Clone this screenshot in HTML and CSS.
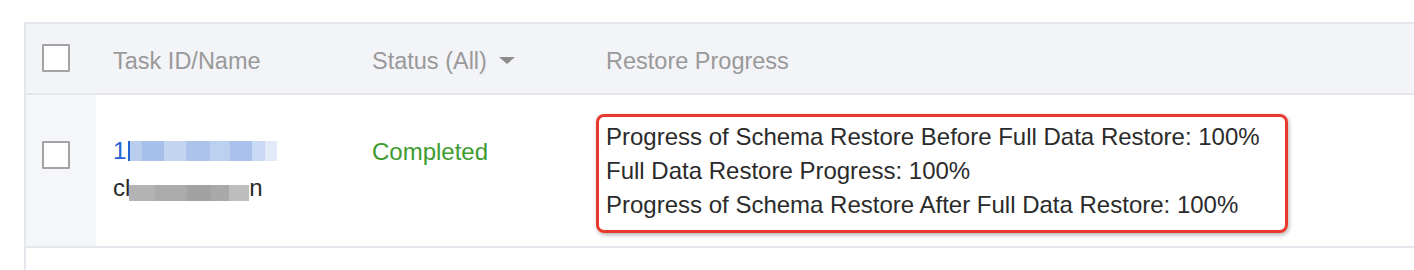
FILE: index.html
```html
<!DOCTYPE html>
<html lang="en">
<head>
    <meta charset="UTF-8">
    <meta name="viewport" content="width=device-width, initial-scale=1.0">
    <title>Restore Tasks</title>
    <link rel="stylesheet" href="styles.css">
</head>
<body>
    <!-- Task table -->
    <div class="task-table">
        <div class="table-head">
            <div class="cell check-cell"><span class="checkbox"></span></div>
            <div class="cell">Task ID/Name</div>
            <div class="cell">Status (All) <span class="caret"></span></div>
            <div class="cell">Restore Progress</div>
        </div>
        <div class="table-row">
            <div class="cell check-cell"><span class="checkbox"></span></div>
            <div class="cell task-cell">
                <div class="task-id">1<span class="cursor"></span><span class="mask mask-blue"></span></div>
                <div class="task-name">cl<span class="mask mask-gray"></span>n</div>
            </div>
            <div class="cell status-cell">Completed</div>
            <div class="cell progress-cell">
                <div class="highlight-box">
                    <div>Progress of Schema Restore Before Full Data Restore: 100%</div>
                    <div>Full Data Restore Progress: 100%</div>
                    <div>Progress of Schema Restore After Full Data Restore: 100%</div>
                </div>
            </div>
        </div>
    </div>
</body>
</html>
```

FILE: styles.css
```css
* {
    margin: 0;
    padding: 0;
    box-sizing: border-box;
    font-family: 'Liberation Sans', Arial, Helvetica, sans-serif;
}

body {
    background-color: #fff;
}

.task-table {
    margin: 22px 0 0 24px;
    border-left: 2px solid #e4e6eb;
    border-top: 2px solid #e4e6eb;
    height: 248px;
}

.table-head,
.table-row {
    display: grid;
    grid-template-columns: 70px 259px 234px 1fr;
    border-bottom: 2px solid #e4e6eb;
}

.table-head {
    height: 71px;
    background-color: #f3f4f8;
    align-items: center;
    color: #999;
    font-size: 23.5px;
}

.cell {
    padding-left: 17px;
}

.table-head .cell {
    padding-top: 5px;
}

.check-cell {
    padding-left: 16px;
}

.table-head .check-cell {
    padding-top: 0;
    padding-bottom: 2px;
    display: flex;
}

.checkbox {
    display: block;
    width: 28px;
    height: 28px;
    border: 2px solid #a3a3a3;
    border-radius: 1px;
    background-color: #fff;
}

.caret {
    display: inline-block;
    width: 0;
    height: 0;
    margin-left: 6px;
    border-left: 8px solid transparent;
    border-right: 8px solid transparent;
    border-top: 7px solid #8c8c8c;
    vertical-align: middle;
    position: relative;
    top: -2px;
}

.table-row {
    height: 153px;
    color: #2b2b2b;
    font-size: 24px;
}

.table-row .check-cell {
    background-color: #f5f6fa;
    padding-top: 46px;
}

.task-cell {
    padding-top: 37px;
    line-height: 37px;
}

.task-id {
    color: #2563d4;
    white-space: nowrap;
}

.cursor {
    display: inline-block;
    width: 2px;
    height: 20px;
    margin-left: 2px;
    background-color: #2563d4;
    vertical-align: middle;
    position: relative;
    top: -2px;
}

.mask {
    display: inline-block;
    vertical-align: middle;
}

.mask-blue {
    width: 147px;
    height: 20px;
    background: linear-gradient(90deg, #b9cdef 0, #b9cdef 12px, #a7bfeb 12px, #a7bfeb 34px, #c4d5f2 34px, #c4d5f2 56px, #acc3ec 56px, #acc3ec 80px, #bcd0f0 80px, #bcd0f0 100px, #a9c1ec 100px, #a9c1ec 122px, #c9d8f3 122px, #c9d8f3 135px, #e2eaf8 135px);
    position: relative;
    top: -2px;
}

.task-name {
    white-space: nowrap;
}

.mask-gray {
    width: 120px;
    height: 16px;
    margin-left: -1px;
    background: linear-gradient(90deg, #b3b3b3 0, #b3b3b3 26px, #ababab 26px, #ababab 58px, #a2a2a2 58px, #a2a2a2 82px, #a9a9a9 82px, #a9a9a9 100px, #bdbdbd 100px);
    position: relative;
    top: 3px;
}

.status-cell {
    padding-top: 43px;
    color: #3d9b2f;
}

.progress-cell {
    padding-left: 7px;
    padding-top: 19px;
}

.highlight-box {
    display: inline-block;
    width: 692px;
    border: 3px solid #e8392d;
    border-radius: 8px;
    padding: 3px 0 8px 7px;
    font-size: 24px;
    line-height: 34px;
    white-space: nowrap;
    box-shadow: 1px 2px 4px rgba(0, 0, 0, 0.3);
}
```
